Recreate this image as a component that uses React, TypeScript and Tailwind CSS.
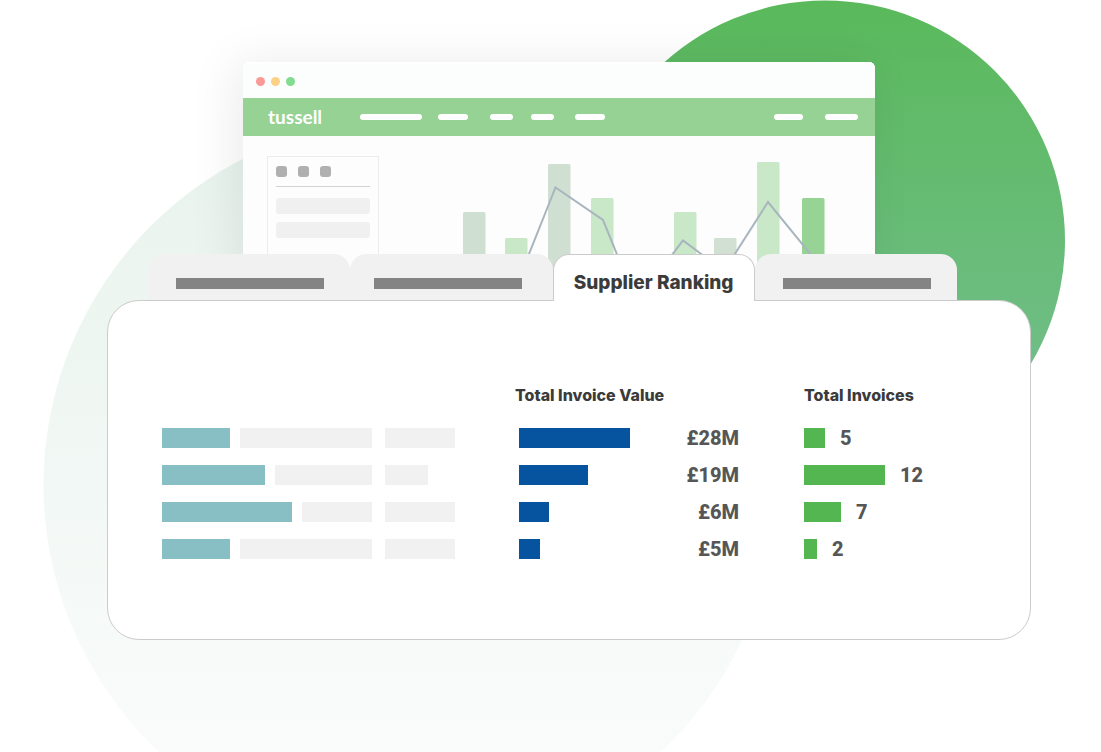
import { FC } from "react";

const suppliers = [
  {
    name: "w-[68px]",
    tag: "w-[70px]",
    value: "£28M",
    valueBar: "w-[111px]",
    invoices: 5,
    invoicesBar: "w-[21px]",
  },
  {
    name: "w-[103px]",
    tag: "w-[43px]",
    value: "£19M",
    valueBar: "w-[69px]",
    invoices: 12,
    invoicesBar: "w-[81px]",
  },
  {
    name: "w-[130px]",
    tag: "w-[70px]",
    value: "£6M",
    valueBar: "w-[30px]",
    invoices: 7,
    invoicesBar: "w-[37px]",
  },
  {
    name: "w-[68px]",
    tag: "w-[70px]",
    value: "£5M",
    valueBar: "w-[21px]",
    invoices: 2,
    invoicesBar: "w-[13px]",
  },
];

const navLinks = [
  { slot: "w-[78px]", pill: "w-[62px]" },
  { slot: "w-[52px]", pill: "w-[30px]" },
  { slot: "w-[41px]", pill: "w-[23px]" },
  { slot: "w-[44px]", pill: "w-[23px]" },
  { slot: "w-[30px]", pill: "w-[30px]" },
];

const chartBars = [
  { x: 463, y: 212, fill: "#cfe0d2" },
  { x: 505, y: 238, fill: "#c8e8c8" },
  { x: 548, y: 164, fill: "#cfe0d2" },
  { x: 591, y: 198, fill: "#c8e8c8" },
  { x: 674, y: 212, fill: "#c9e8c8" },
  { x: 714, y: 238, fill: "#d1e0d2" },
  { x: 757, y: 162, fill: "#c9e8c8" },
  { x: 802, y: 198, fill: "#96d394" },
];

const Backdrop: FC = () => (
  <svg
    className="absolute left-0 top-0 -z-10"
    width="1101"
    height="852"
    viewBox="0 0 1101 852"
    aria-hidden="true"
  >
    <defs>
      <linearGradient id="green" x1="0" y1="0" x2="0" y2="1">
        <stop offset="0" stopColor="#5ab95b" />
        <stop offset="1" stopColor="#76bf94" />
      </linearGradient>
      <linearGradient id="mint" x1="0" y1="0" x2="0" y2="1">
        <stop offset="0" stopColor="#e8f3ed" />
        <stop offset="1" stopColor="#fcfdfd" />
      </linearGradient>
    </defs>
    <circle cx="825" cy="240.500" r="240" fill="url(#green)" />
    <circle cx="410" cy="485" r="366.500" fill="url(#mint)" />
  </svg>
);

const Chart: FC = () => (
  <svg width="364" height="130" viewBox="462 156 364 130" aria-hidden="true">
    {chartBars.map((bar) => (
      <rect
        key={bar.x}
        x={bar.x}
        y={bar.y}
        width="22.5"
        height="140"
        rx="1.5"
        fill={bar.fill}
      />
    ))}
    <path
      d="M521 274 555.500 187.500 603 220 625 274M662 268 683 240.500 724 271 768 202 825 272"
      fill="none"
      stroke="#a9b5be"
      strokeWidth="2"
    />
  </svg>
);

const BrowserWindow: FC = () => (
  <div className="ml-[136px] mr-[156px] overflow-hidden rounded-t-md bg-[#fdfdfd] shadow-[-8px_0_48px_rgba(0,0,0,0.08)]">
    {/* Title bar */}
    <div className="flex h-9 items-center gap-[6px] border-t-2 border-white bg-[#fcfdfd] pl-[13px]">
      <span className="h-[9px] w-[9px] rounded-full bg-[#fa9a97]" />
      <span className="h-[9px] w-[9px] rounded-full bg-[#fbd285]" />
      <span className="h-[9px] w-[9px] rounded-full bg-[#82dc8f]" />
    </div>

    {/* Nav */}
    <nav className="flex h-[38px] items-center bg-[#95d294] pl-[25px] pr-[17px]">
      <a
        href="#"
        className="w-[92px] font-['Lato',sans-serif] text-[19px] font-bold leading-6 text-white"
      >
        tussell
      </a>
      {navLinks.map((link, i) => (
        <a key={i} href="#" aria-label={`Link ${i + 1}`} className={link.slot}>
          <span className={`block h-[6px] rounded-full bg-white ${link.pill}`} />
        </a>
      ))}
      <div className="ml-auto flex gap-[22px]">
        <a href="#" aria-label="Help">
          <span className="block h-[6px] w-[29px] rounded-full bg-white" />
        </a>
        <a href="#" aria-label="Account">
          <span className="block h-[6px] w-[33px] rounded-full bg-white" />
        </a>
      </div>
    </nav>

    {/* Content */}
    <div className="flex justify-between pl-6 pr-[49px] pt-5">
      <div className="w-28 border border-[#ececec] px-2 pt-[9px]">
        <div className="flex gap-[11px] border-b border-[#d2d4d3] pb-[9px]">
          <span className="h-[11px] w-[11px] rounded-[3px] bg-[#b0b0b0]" />
          <span className="h-[11px] w-[11px] rounded-[3px] bg-[#b0b0b0]" />
          <span className="h-[11px] w-[11px] rounded-[3px] bg-[#b0b0b0]" />
        </div>
        <div className="mt-[11px] h-4 rounded-[3px] bg-[#f0f0f0]" />
        <div className="mt-2 h-4 rounded-[3px] bg-[#f0f0f0]" />
      </div>
      <Chart />
    </div>
  </div>
);

const PlaceholderTab: FC<{ label: string; className?: string }> = ({
  label,
  className,
}) => (
  <button
    type="button"
    role="tab"
    aria-selected="false"
    aria-label={label}
    className={`h-[46px] rounded-t-2xl bg-[#f1f1f1] pt-3 ${className}`}
  >
    <span className="block h-[11px] w-[148px] bg-[#848484]" />
  </button>
);

const App: FC = () => {
  return (
    <div className="relative isolate min-h-screen overflow-hidden bg-white pl-[107px] pr-[70px] pt-[62px]">
      <Backdrop />
      <BrowserWindow />

      {/* Tabs */}
      <div
        role="tablist"
        className="relative z-10 -mt-8 ml-[41px] mr-[74px] grid grid-cols-4 items-start"
      >
        <PlaceholderTab label="Tab 1" className="pl-7" />
        <PlaceholderTab label="Tab 2" className="pl-6" />
        <button
          type="button"
          role="tab"
          aria-selected="true"
          className="h-[47px] whitespace-nowrap rounded-t-2xl border border-b-0 border-[#cbcbcb] bg-white pt-[10px] text-center font-['Inter',sans-serif] text-[19px] font-extrabold leading-6 text-[#3b3b3b]"
        >
          Supplier Ranking
        </button>
        <PlaceholderTab label="Tab 4" className="pl-7" />
      </div>

      {/* Ranking */}
      <div className="-mt-px rounded-[32px] border border-[#cbcbcb] bg-white pb-[63px] pl-[54px] pr-8 pt-[82px]">
        <table className="w-full table-fixed text-left">
          <thead>
            <tr className="h-[45px] align-top font-['Inter',sans-serif] text-base leading-6 text-[#3b3b3b]">
              <td className="w-[353px]" />
              <th
                colSpan={2}
                className="w-[289px] whitespace-nowrap font-extrabold"
              >
                Total Invoice Value
              </th>
              <th className="font-extrabold">Total Invoices</th>
            </tr>
          </thead>
          <tbody className="font-['Roboto',sans-serif] text-xl font-extrabold leading-5 text-[#565656]">
            {suppliers.map((row) => (
              <tr key={row.value} className="h-[37px] align-top">
                <td>
                  <div className="flex gap-[13px]">
                    <div className="flex w-[210px] gap-[10px]">
                      <span className={`h-5 bg-[#87bfc4] ${row.name}`} />
                      <span className="h-5 flex-1 bg-[#f1f1f1]" />
                    </div>
                    <span className={`h-5 bg-[#f1f1f1] ${row.tag}`} />
                  </div>
                </td>
                <td className="pl-1">
                  <div className={`h-5 bg-[#06549f] ${row.valueBar}`} />
                </td>
                <td className="pr-[65px] text-right">{row.value}</td>
                <td>
                  <div className="flex gap-[15px]">
                    <span className={`h-5 bg-[#53b651] ${row.invoicesBar}`} />
                    {row.invoices}
                  </div>
                </td>
              </tr>
            ))}
          </tbody>
        </table>
      </div>
    </div>
  );
};

export default App;
